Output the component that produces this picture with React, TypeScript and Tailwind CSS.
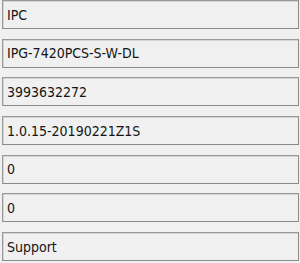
const values = [
  'IPC',
  'IPG-7420PCS-S-W-DL',
  '3993632272',
  '1.0.15-20190221Z1S',
  '0',
  '0',
  'Support',
];

export default function App() {
  return (
    <main
      className="w-[300px] h-[263px] bg-[#f0f0f0] flex flex-col gap-[9.7px] pl-[2px] pr-[1px] overflow-hidden"
      style={{ fontFamily: '"DejaVu Sans Condensed", Tahoma, "DejaVu Sans", sans-serif' }}
    >
      {values.map((v, i) => (
        <div
          key={i}
          className="h-[29px] shrink-0 flex items-center px-[4px] bg-[#f0f0f0] border border-t-[#999999] border-l-[#999999] border-b-[#8a8a8a] border-r-[#8a8a8a] shadow-[inset_1px_1px_0_#d4d4d4] text-[14px] text-[#151515] leading-none"
        >
          {v}
        </div>
      ))}
    </main>
  );
}
